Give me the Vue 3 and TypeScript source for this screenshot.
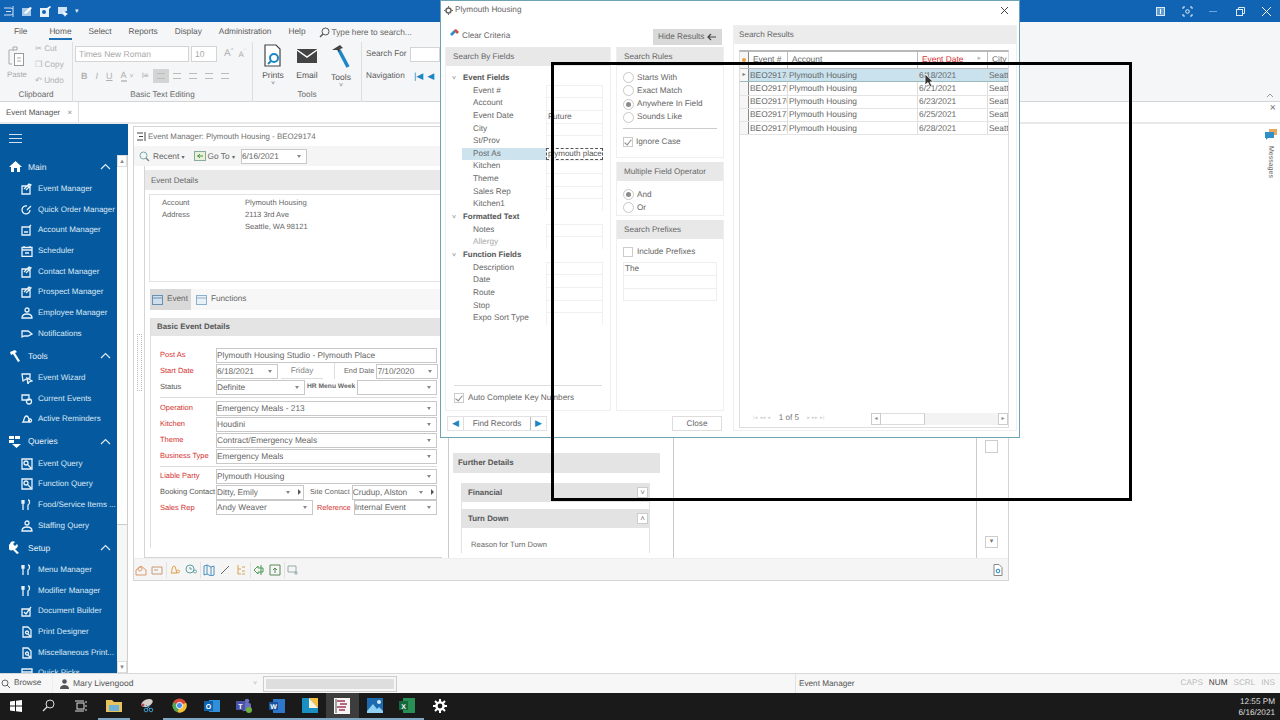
<template>
  <div class="screen">
    <!-- Title bar -->
    <div class="titlebar">
      <div class="qa-icons">
        <svg width="13" height="13" viewBox="0 0 13 13"><path d="M1 3h7M3 6.500h5M1 10h7M10 1v11M8 3l2 1M8 10l2-1" stroke="#cfe2f5" fill="none" /></svg>
        <svg width="13" height="13" viewBox="0 0 13 13"><rect x="1" y="3" width="9" height="8" fill="#a9cbe8" /><path d="M3 8l6-6 2 1-6 6z" fill="#fff" /></svg>
        <svg width="13" height="13" viewBox="0 0 13 13"><rect x="1" y="3" width="9" height="9" fill="#e8f1fa" /><circle cx="5" cy="7" r="2" fill="#1163b3" /><path d="M8 3l3-2 1 1-3 3z" fill="#fff" /></svg>
        <svg width="13" height="13" viewBox="0 0 13 13"><path d="M1 2h9v4l-3 1 1 4-3-2-4 0z" fill="#cfe2f5" /><path d="M6 6l5 3-2 1-1 2z" fill="#fff" /></svg>
        <span class="qa-caret">▾</span>
      </div>
      <div class="win-btns">
        <svg width="11" height="11" viewBox="0 0 11 11"><rect x="1.500" y="1.500" width="8" height="8" fill="#5d9bd5" stroke="#dbe9f6" /><path d="M5.500 3v5" stroke="#fff" /></svg>
        <svg width="11" height="11" viewBox="0 0 11 11"><path d="M1 3V1h2M8 1h2v2M10 8v2H8M3 10H1V8" stroke="#e8f1fa" fill="none" /><circle cx="5.500" cy="5.500" r="1.800" stroke="#e8f1fa" fill="none" /></svg>
        <svg width="11" height="11" viewBox="0 0 11 11"><path d="M1 5.500h8" stroke="#6ea6dc" /></svg>
        <svg width="11" height="11" viewBox="0 0 11 11"><rect x="1.500" y="3.500" width="6" height="6" fill="none" stroke="#dbe9f6" /><path d="M3.500 3.500v-2h6v6h-2" fill="none" stroke="#dbe9f6" /></svg>
        <svg width="11" height="11" viewBox="0 0 11 11"><path d="M1 1l9 9M10 1l-9 9" stroke="#fff" /></svg>
      </div>
    </div>

    <!-- Ribbon -->
    <div class="ribbon">
      <div class="menu-tabs">
        <span v-for="tab in menuTabs" :key="tab" :class="['menu-tab', { current: tab === 'Home' }]">{{ tab }}</span>
        <svg class="search-glass" width="11" height="11" viewBox="0 0 11 11"><circle cx="6.500" cy="4.500" r="3.500" fill="none" stroke="#555" /><path d="M4 7l-3 3" stroke="#555" stroke-width="1.500" /></svg>
        <span class="search-hint">Type here to search...</span>
      </div>
      <div class="ribbon-body">
        <div class="r-group clip-group">
          <div class="r-top">
            <div class="paste">
              <svg width="18" height="24" viewBox="0 0 18 24"><path d="M1 5h5M1 5v14h3M5 2h4v3H5z" stroke="#aaa" fill="none" /><rect x="6.500" y="8.500" width="9" height="12" fill="#fff" stroke="#999" /><path d="M9 13h4M9 16h4" stroke="#aaa" /></svg>
              <span>Paste</span>
            </div>
            <div class="clip-list">
              <span>✂ Cut</span>
              <span>❐ Copy</span>
              <span>↶ Undo</span>
            </div>
          </div>
          <div class="r-label">Clipboard</div>
        </div>
        <div class="r-group text-group">
          <div class="r-top text-tools">
            <div class="font-row">
              <div class="font-box font-name">Times New Roman</div>
              <div class="font-box font-size">10</div>
              <span class="grow-a">A<sup>^</sup></span>
              <span class="grow-a small-a">A<sup>ˇ</sup></span>
            </div>
            <div class="fmt-row">
              <b>B</b><i>I</i><u>U</u>
              <span class="fmt-a">A</span>
              <span class="fmt-gap">˅</span>
              <span class="fmt-para">I≡</span>
              <span class="fmt-lines active"></span>
              <span class="fmt-lines"></span>
              <span class="fmt-lines"></span>
              <span class="fmt-lines"></span>
              <span class="fmt-lines"></span>
            </div>
          </div>
          <div class="r-label">Basic Text Editing</div>
        </div>
        <div class="r-group tools-group">
          <div class="r-top big-row">
            <div class="big-btn">
              <svg width="20" height="24" viewBox="0 0 20 24"><path d="M2 1h11l4 4v17H2z" fill="#fff" stroke="#444" stroke-width="1.200" /><circle cx="11" cy="14" r="4" fill="none" stroke="#1c86c6" stroke-width="2" /><path d="M8 17l-3 3" stroke="#1c86c6" stroke-width="2" /></svg>
              <span>Prints</span>
              <span class="big-caret">˅</span>
            </div>
            <div class="big-btn">
              <svg width="24" height="24" viewBox="0 0 24 24"><path d="M2 5h20v14H2z" fill="#444" /><path d="M2 6l10 7 10-7" fill="none" stroke="#fff" stroke-width="1.500" /></svg>
              <span>Email</span>
            </div>
            <div class="big-btn">
              <svg width="24" height="26" viewBox="0 0 24 26"><path d="M10 6l9 17" stroke="#1c86c6" stroke-width="3.500" /><path d="M3 6l8-5 3 3-3 1-1 3-2-2z" fill="#444" /></svg>
              <span>Tools</span>
              <span class="big-caret">˅</span>
            </div>
          </div>
          <div class="r-label">Tools</div>
        </div>
        <div class="r-group nav-group">
          <div class="nav-line"><span class="nav-label">Search For</span><div class="search-for"></div></div>
          <div class="nav-line"><span class="nav-label">Navigation</span><span class="nav-arrow">|◀</span><span class="nav-arrow">◀</span></div>
        </div>
        <svg class="ribbon-collapse" width="8" height="6" viewBox="0 0 8 6"><path d="M1 5l3-3 3 3" fill="none" stroke="#999" /></svg>
      </div>
    </div>

    <!-- Document tabs -->
    <div class="doc-tabs">
      <div class="doc-tab">Event Manager <span class="doc-x">×</span></div>
      <span class="doc-close">×</span>
    </div>

    <div class="workspace">
      <!-- Left navigation -->
      <aside class="sidebar">
        <div class="burger"><span></span><span></span><span></span></div>
        <div class="side-scroll-wrap">
          <nav class="side-list">
            <template v-for="section in navSections" :key="section.title">
              <div class="side-head">
                <svg width="13" height="13" viewBox="0 0 13 13"><path :d="section.icon" fill="#fff" /></svg>
                <span>{{ section.title }}</span>
                <svg class="side-chevron" width="11" height="7" viewBox="0 0 11 7"><path d="M1 6l4.500-4.500L10 6" fill="none" stroke="#dfeaf5" stroke-width="1.200" /></svg>
              </div>
              <div v-for="item in section.items" :key="item.label" class="side-item">
                <svg width="12" height="12" viewBox="0 0 12 12"><path :d="iconPaths[item.icon]" fill="none" stroke="#eaf2fa" stroke-width="1.300" /></svg>
                <span>{{ item.label }}</span>
              </div>
            </template>
          </nav>
          <div class="side-bar">
            <div class="sb-btn">▴</div>
            <div class="sb-thumb"></div>
            <div class="sb-rest"></div>
            <div class="sb-btn">▾</div>
          </div>
        </div>
      </aside>

      <!-- Event Manager window -->
      <div class="grip"></div>
      <section class="panel">
        <div class="panel-title">
          <svg width="11" height="11" viewBox="0 0 11 11"><path d="M1 2h6M3 5.500h4M1 9h6M9 1v9" stroke="#444" fill="none" /></svg>
          <span>Event Manager: Plymouth Housing - BEO29174</span>
        </div>
        <div class="panel-toolbar">
          <svg width="11" height="11" viewBox="0 0 11 11"><circle cx="4.500" cy="4.500" r="3.500" fill="none" stroke="#7aa" /><path d="M7 7l3 3" stroke="#888" stroke-width="1.500" /></svg>
          <span>Recent <small>▾</small></span>
          <svg class="goto-icon" width="12" height="10" viewBox="0 0 12 10"><rect x="0.500" y="0.500" width="11" height="9" fill="#e6f2da" stroke="#8a9" /><path d="M3 5h6M6 3l-2 2 2 2" stroke="#5a8a3a" fill="none" /></svg>
          <span class="goto-txt">Go To <small>▾</small></span>
          <div class="field goto-date"><span>6/16/2021</span><i class="caret"></i></div>
        </div>
        <div class="panel-body">
          <div class="splitter"><div></div></div>

          <div class="col-left">
            <div class="sec-head">Event Details</div>
            <div class="details-box">
              <div class="detail-line"><span>Account</span><span>Plymouth Housing</span></div>
              <div class="detail-line"><span>Address</span><span>2113 3rd Ave</span></div>
              <div class="detail-line"><span></span><span>Seattle, WA 98121</span></div>
            </div>
            <div class="view-tabs">
              <div class="view-tab on">
                <svg width="11" height="10" viewBox="0 0 11 10"><rect x="0.500" y="0.500" width="10" height="9" fill="#cfdfee" stroke="#6b8fae" /><path d="M0 3h11" stroke="#6b8fae" /></svg>
                Event
              </div>
              <div class="view-tab">
                <svg width="11" height="10" viewBox="0 0 11 10"><rect x="0.500" y="0.500" width="10" height="9" fill="#e8f0f8" stroke="#8fb0cc" /><path d="M0 3h11" stroke="#8fb0cc" /></svg>
                Functions
              </div>
            </div>
            <div class="basic-box">
              <div class="basic-head">Basic Event Details</div>
              <div class="form">
                <div class="f-row">
                  <label class="req">Post As</label>
                  <div class="field grow"><span>Plymouth Housing Studio - Plymouth Place</span></div>
                </div>
                <div class="f-row">
                  <label class="req">Start Date</label>
                  <div class="field w62"><span>6/18/2021</span><i class="caret"></i></div>
                  <div class="weekday">Friday</div>
                  <div class="v-sep"></div>
                  <span class="mini">End Date</span>
                  <div class="field w62 tight"><span>7/10/2020</span><i class="caret"></i></div>
                </div>
                <div class="f-row">
                  <label>Status</label>
                  <div class="field w89"><span>Definite</span><i class="caret"></i></div>
                  <span class="mini strong hr-label">HR Menu Week</span>
                  <div class="field grow"><i class="caret caret-end"></i></div>
                </div>
                <div class="f-line"></div>
                <div v-for="row in opRows" :key="row.label" class="f-row">
                  <label class="req">{{ row.label }}</label>
                  <div class="field grow"><span>{{ row.value }}</span><i class="caret"></i></div>
                </div>
                <div class="f-line second"></div>
                <div class="f-row">
                  <label class="req">Liable Party</label>
                  <div class="field grow"><span>Plymouth Housing</span><i class="caret"></i></div>
                </div>
                <div class="f-row">
                  <label>Booking Contact</label>
                  <div class="field w88"><span>Ditty, Emily</span><i class="caret"></i><i class="go"></i></div>
                  <span class="mini site-label">Site Contact</span>
                  <div class="field grow"><span>Crudup, Alston</span><i class="caret"></i><i class="go"></i></div>
                </div>
                <div class="f-row last">
                  <label class="req">Sales Rep</label>
                  <div class="field w97"><span>Andy Weaver</span><i class="caret"></i></div>
                  <span class="mini req ref-label">Reference</span>
                  <div class="field grow"><span>Internal Event</span><i class="caret"></i></div>
                </div>
              </div>
            </div>
          </div>

          <div class="col-mid">
            <div class="further-head">Further Details</div>
            <div class="fold-box">
              <div class="fold-head">Financial <span class="fold-btn">˅</span></div>
              <div class="fold-head second">Turn Down <span class="fold-btn">˄</span></div>
              <div class="fold-text">Reason for Turn Down</div>
            </div>
          </div>

          <div class="col-right"></div>

          <div class="col-scroll">
            <div class="cs-thumb"></div>
            <div class="cs-btn">▾</div>
          </div>
        </div>
        <div class="panel-footer">
          <template v-for="(group, g) in footerIcons" :key="g">
            <div class="foot-group">
              <svg v-for="(ic, i) in group" :key="i" width="12" height="12" viewBox="0 0 12 12">
                <path :d="ic.d" fill="none" :stroke="ic.color" stroke-width="1" />
              </svg>
            </div>
          </template>
          <svg class="foot-doc" width="10" height="12" viewBox="0 0 10 12"><path d="M1 .500h5l3 3v8H1z" fill="#fff" stroke="#888" /><circle cx="5" cy="7" r="1.800" fill="none" stroke="#1c86c6" /></svg>
        </div>
      </section>

      <div class="messages">
        <svg width="12" height="13" viewBox="0 0 12 13"><rect x="4" y="0" width="8" height="6" fill="#e8a860" /><path d="M0 3h9v6H3l-2 2V9H0z" fill="#2f8fc7" /></svg>
        <span>Messages</span>
      </div>
    </div>

    <!-- Status bar -->
    <div class="statusbar">
      <div class="st-browse">
        <svg width="10" height="10" viewBox="0 0 10 10"><circle cx="4" cy="4" r="3" fill="none" stroke="#666" /><path d="M6 6l3 3" stroke="#666" /></svg>
        Browse
      </div>
      <div class="st-user">
        <svg width="9" height="10" viewBox="0 0 9 10"><circle cx="4.500" cy="2.500" r="2.300" fill="#555" /><path d="M0 10c0-3 2-4 4.500-4s4.500 1 4.500 4z" fill="#555" /></svg>
        Mary Livengood
      </div>
      <span class="st-caret">˅</span>
      <div class="st-progress"><div></div></div>
      <div class="st-msg">Event Manager</div>
      <div class="st-keys">
        <span>CAPS</span><span class="lit">NUM</span><span>SCRL</span><span>INS</span>
      </div>
    </div>

    <!-- Taskbar -->
    <div class="taskbar">
      <div class="tb-slot">
        <svg width="12" height="12" viewBox="0 0 12 12"><path d="M0 1.500l5-.7v4.700H0zM6 .7L12 0v5.500H6zM0 6.500h5v4.700l-5-.7zM6 6.500h6V12l-6-.8z" fill="#fff" /></svg>
      </div>
      <div class="tb-slot">
        <svg width="13" height="13" viewBox="0 0 13 13"><circle cx="8" cy="5" r="4" fill="none" stroke="#ddd" /><path d="M5 8l-4 4" stroke="#ddd" stroke-width="1.300" /></svg>
      </div>
      <div class="tb-slot">
        <svg width="13" height="12" viewBox="0 0 13 12"><rect x="2" y="3" width="7" height="6" fill="none" stroke="#ddd" /><path d="M0 1h9M0 11h9M11 1v2M11 5v2M11 9v2" stroke="#ddd" /></svg>
      </div>
      <div class="tb-slot run">
        <svg width="16" height="14" viewBox="0 0 16 14"><path d="M0 1h6l2 2h8v10H0z" fill="#e8c25a" /><rect x="3" y="6" width="10" height="6" fill="#6db0d8" /></svg>
      </div>
      <div class="tb-slot">
        <svg width="15" height="15" viewBox="0 0 15 15"><ellipse cx="8" cy="5" rx="6" ry="3.500" fill="#d8d0c8" transform="rotate(-25 8 5)" /><circle cx="4" cy="7" r="1.500" fill="#b34a5a" /><circle cx="7" cy="12" r="1.800" fill="none" stroke="#3f9ad0" /><circle cx="12" cy="12" r="1.800" fill="none" stroke="#3f9ad0" /><path d="M7 7l4 4M11 7l-3 4" stroke="#3f9ad0" /></svg>
      </div>
      <div class="tb-slot run">
        <svg width="15" height="15" viewBox="0 0 16 16"><circle cx="8" cy="8" r="7.500" fill="#d94a38" /><path d="M8 8L1.500 4.500A7.500 7.500 0 0 0 6 15.300z" fill="#4aa851" /><path d="M8 8l-2 7.300A7.500 7.500 0 0 0 15 5z" fill="#f2c233" /><circle cx="8" cy="8" r="3.300" fill="#4c8bf0" stroke="#fff" /></svg>
      </div>
      <div class="tb-slot run">
        <svg width="16" height="14" viewBox="0 0 16 14"><rect x="5" y="1" width="11" height="12" fill="#2f8fd8" /><rect x="0" y="2" width="9" height="10" fill="#0f62ae" /><text x="4.500" y="10" text-anchor="middle" class="ico-letter">O</text></svg>
      </div>
      <div class="tb-slot run">
        <svg width="16" height="15" viewBox="0 0 16 15"><circle cx="11" cy="3" r="2.300" fill="#6a6fc0" /><rect x="6" y="5" width="9" height="8" rx="2" fill="#6a6fc0" /><rect x="0" y="3" width="9" height="9" fill="#4b53a8" /><text x="4.500" y="10.500" text-anchor="middle" class="ico-letter">T</text><circle cx="13" cy="12" r="3" fill="#6fb33f" /></svg>
      </div>
      <div class="tb-slot run">
        <svg width="16" height="14" viewBox="0 0 16 14"><rect x="4" y="0" width="12" height="14" fill="#2f78c9" /><rect x="0" y="3" width="9" height="8" fill="#17529e" /><text x="4.500" y="10" text-anchor="middle" class="ico-letter">W</text></svg>
      </div>
      <div class="tb-slot run">
        <svg width="16" height="15" viewBox="0 0 16 15"><rect width="16" height="15" fill="#f6c044" /><path d="M0 0h7l9 10v5H0z" fill="#1a8fc2" /><path d="M7 0l9 10H7z" fill="#fdf5d8" /></svg>
      </div>
      <div class="tb-slot run on">
        <svg width="16" height="16" viewBox="0 0 16 16"><rect width="16" height="16" fill="#f7f4f4" /><path d="M3 3h8M6 6h7M3 9h9M5 12h6" stroke="#a03a5c" stroke-width="1.600" /><path d="M2 1v14" stroke="#555" /></svg>
      </div>
      <div class="tb-slot run">
        <svg width="16" height="15" viewBox="0 0 16 15"><rect width="16" height="15" fill="#1c6bb0" /><path d="M0 13l6-7 4 5 2-2 4 4v2H0z" fill="#8fd0f2" /><circle cx="12" cy="4" r="2" fill="#cfeaf8" /></svg>
      </div>
      <div class="tb-slot run">
        <svg width="16" height="15" viewBox="0 0 16 15"><rect x="4" y="0" width="12" height="15" fill="#2a8f55" /><rect x="0" y="3" width="9" height="9" fill="#14693c" /><text x="4.500" y="10.500" text-anchor="middle" class="ico-letter">X</text></svg>
      </div>
      <div class="tb-slot">
        <svg width="14" height="14" viewBox="0 0 14 14"><circle cx="7" cy="7" r="3.600" fill="none" stroke="#fff" stroke-width="2.400" /><path d="M7 0v3M7 11v3M0 7h3M11 7h3M2 2l2 2M10 10l2 2M12 2l-2 2M4 10l-2 2" stroke="#fff" stroke-width="2" /></svg>
      </div>
      <div class="tb-clock">
        <div>12:55 PM</div>
        <div>6/16/2021</div>
      </div>
    </div>

    <!-- Search dialog -->
    <div class="dialog">
      <div class="dlg-title">
        <svg width="9" height="9" viewBox="0 0 9 9"><circle cx="4.500" cy="4.500" r="2.500" fill="none" stroke="#666" stroke-width="1.500" /><path d="M4.500 0v1.500M4.500 7.500V9M0 4.500h1.500M7.500 4.500H9" stroke="#666" /></svg>
        <span>Plymouth Housing</span>
        <svg class="dlg-x" width="9" height="9" viewBox="0 0 9 9"><path d="M1 1l7 7M8 1L1 8" stroke="#444" /></svg>
      </div>
      <div class="dlg-main">
        <div class="dlg-left">
          <div class="dlg-actions">
            <svg width="9" height="9" viewBox="0 0 9 9"><path d="M0 5l4-4 2 2-4 4z" fill="#2f8fc7" /><path d="M4 1l2-1 3 3-2 2-1-1z" fill="#d8493f" /></svg>
            <span class="clear-txt">Clear Criteria</span>
            <div class="hide-btn">
              <span>Hide Results</span>
              <svg width="9" height="8" viewBox="0 0 9 8"><path d="M9 4H1M4 1L1 4l3 3" fill="none" stroke="#444" stroke-width="1.200" /></svg>
            </div>
          </div>
          <div class="dlg-cols">
            <div class="by-fields">
              <div class="box-head">Search By Fields</div>
              <div class="tree">
                <template v-for="row in fieldRows" :key="row.label">
                  <div v-if="row.head" class="t-row t-head"><span class="t-chev">˅</span>{{ row.label }}</div>
                  <div v-else :class="['t-row', { picked: row.picked }]">
                    <span :class="['t-name', { dim: row.dim }]">{{ row.label }}</span>
                    <span :class="['t-input', { dashed: row.picked }]">{{ row.value }}</span>
                  </div>
                </template>
              </div>
              <div class="auto-line">
                <span class="check on"></span>
                <span>Auto Complete Key Numbers</span>
              </div>
            </div>
            <div class="rules">
              <div class="rule-box rule-a">
                <div class="box-head">Search Rules</div>
                <div class="rule-body">
                  <div v-for="rule in searchRules" :key="rule" class="radio-line">
                    <span :class="['radio', { on: rule === 'Anywhere In Field' }]"></span>{{ rule }}
                  </div>
                  <div class="rule-sep"></div>
                  <div class="radio-line"><span class="check on"></span>Ignore Case</div>
                </div>
              </div>
              <div class="rule-box rule-b">
                <div class="box-head">Multiple Field Operator</div>
                <div class="rule-body">
                  <div class="radio-line"><span class="radio on"></span>And</div>
                  <div class="radio-line"><span class="radio"></span>Or</div>
                </div>
              </div>
              <div class="rule-box rule-c">
                <div class="box-head">Search Prefixes</div>
                <div class="rule-body">
                  <div class="radio-line prefix-check"><span class="check"></span>Include Prefixes</div>
                  <div class="prefix-cell">The</div>
                  <div class="prefix-cell"></div>
                  <div class="prefix-cell"></div>
                </div>
              </div>
            </div>
          </div>
          <div class="dlg-bottom">
            <div class="find-btn">
              <span class="find-arrow">◀</span>
              <span class="find-txt">Find Records</span>
              <span class="find-arrow">▶</span>
            </div>
            <div class="close-btn">Close</div>
          </div>
        </div>
        <div class="dlg-right">
          <div class="box-head results-head">Search Results</div>
          <div class="grid">
            <div class="g-head">
              <div class="g-mark"><i></i></div>
              <div class="g-cell c1">Event #</div>
              <div class="g-cell c2">Account</div>
              <div class="g-cell c3 sorted">Event Date <em>▸</em></div>
              <div class="g-cell c4">City</div>
            </div>
            <div v-for="(r, idx) in results" :key="r.id" :class="['g-row', { sel: idx === 0 }]">
              <div class="g-mark">{{ idx === 0 ? '▸' : '' }}</div>
              <div class="g-cell c1">{{ r.id }}</div>
              <div class="g-cell c2">Plymouth Housing</div>
              <div class="g-cell c3">{{ r.date }}</div>
              <div class="g-cell c4">Seattle</div>
            </div>
            <div class="g-space"></div>
            <div class="g-pager">
              <span class="pg-nav">|◂ ◂◂ ◂</span>
              <span class="pg-num">1 of 5</span>
              <span class="pg-nav">▸ ▸▸ ▸|</span>
              <div class="pg-scroll">
                <span class="ps-btn">◂</span>
                <span class="ps-thumb"></span>
                <span class="ps-track"></span>
                <span class="ps-btn">▸</span>
              </div>
            </div>
          </div>
        </div>
      </div>
    </div>

    <!-- Mouse pointer, over the grid -->
    <svg class="pointer" width="10" height="15" viewBox="0 0 10 15"><path d="M1 1v11l3-2.500L6 14l2-1-2-4h3.500z" fill="#333" stroke="#fff" stroke-width="0.800" /></svg>

    <!-- Annotation frame -->
    <div class="frame"></div>
  </div>
</template>

<script setup lang="ts">
interface NavItem {
  label: string
  icon: string
}

interface NavSection {
  title: string
  icon: string
  items: NavItem[]
}

interface FieldRow {
  label: string
  head?: boolean
  value?: string
  picked?: boolean
  dim?: boolean
}

const menuTabs = ['File', 'Home', 'Select', 'Reports', 'Display', 'Administration', 'Help']

const iconPaths: Record<string, string> = {
  form: 'M1 3h8v8H1zM3 6l5-5 2 1-5 5',
  ring: 'M9 6a4 4 0 1 1-3-4M6 6l4-4',
  card: 'M1 3h8v8H1zM3 8h4M5 5.500h.1M8 3l2-2',
  cal: 'M1 2.500h10v9H1zM1 5h10M3 1v2M9 1v2M4 8h4',
  person: 'M6 1a2 2 0 1 1 0 4 2 2 0 0 1 0-4M1 11c0-3 2-4 5-4s5 1 5 4z',
  flag: 'M1 3h6l4 3-4 2H3l-2 1z',
  wizard: 'M1 2h8v4l-4 1-3 2zM6 6l5 3-3 1-1 2z',
  clock: 'M1 2h7v5H1zM8 6a2.500 2.500 0 1 1 0 5 2.500 2.500 0 0 1 0-5',
  bell: 'M2 9c1-1 1-6 3.500-6S8 8 9 9zM9 9a1.500 1.500 0 1 1 .1 0',
  query: 'M1 1h10v10H1zM3 5a2 2 0 1 1 4 0 2 2 0 0 1-4 0M7 7l3 3',
  food: 'M2 1v10M1 1v3h2V1M7 1c2 0 2 4 0 5v5',
  doc: 'M2 1h5l3 3v7H2zM6 8a1.500 1.500 0 1 1 0-3 1.500 1.500 0 0 1 0 3M7 8l2 2',
  tick: 'M1 4h8v7H1zM3 7l2 2 5-7',
  grid: 'M1 2h10v8H1zM1 5h10',
}

const navSections: NavSection[] = [
  {
    title: 'Main',
    icon: 'M6.500 1L13 7h-2v5H8V8H5v4H2V7H0z',
    items: [
      { label: 'Event Manager', icon: 'form' },
      { label: 'Quick Order Manager', icon: 'ring' },
      { label: 'Account Manager', icon: 'card' },
      { label: 'Scheduler', icon: 'cal' },
      { label: 'Contact Manager', icon: 'form' },
      { label: 'Prospect Manager', icon: 'form' },
      { label: 'Employee Manager', icon: 'person' },
      { label: 'Notifications', icon: 'flag' },
    ],
  },
  {
    title: 'Tools',
    icon: 'M1 3l5-2 2 2-2 1 5 8-2 1-5-8-2 1z',
    items: [
      { label: 'Event Wizard', icon: 'wizard' },
      { label: 'Current Events', icon: 'clock' },
      { label: 'Active Reminders', icon: 'bell' },
    ],
  },
  {
    title: 'Queries',
    icon: 'M0 1h5v3H0zM6 1h5v3H6zM0 5h5v3H0zM3 9h9l-4.500 4z',
    items: [
      { label: 'Event Query', icon: 'query' },
      { label: 'Function Query', icon: 'query' },
      { label: 'Food/Service Items ...', icon: 'food' },
      { label: 'Staffing Query', icon: 'person' },
    ],
  },
  {
    title: 'Setup',
    icon: 'M1 3a3 3 0 0 1 5-2L4 3l2 2 2-2a3 3 0 0 1-2 5l4 4-2 1-4-4a3 3 0 0 1-3-6z',
    items: [
      { label: 'Menu Manager', icon: 'food' },
      { label: 'Modifier Manager', icon: 'food' },
      { label: 'Document Builder', icon: 'tick' },
      { label: 'Print Designer', icon: 'doc' },
      { label: 'Miscellaneous Print...', icon: 'doc' },
      { label: 'Quick Picks', icon: 'grid' },
    ],
  },
]

const opRows = [
  { label: 'Operation', value: 'Emergency Meals - 213' },
  { label: 'Kitchen', value: 'Houdini' },
  { label: 'Theme', value: 'Contract/Emergency Meals' },
  { label: 'Business Type', value: 'Emergency Meals' },
]

const footerIcons = [
  [
    { d: 'M1 6l5-4 5 4v5H1zM5 7a2 2 0 1 1 .1 0', color: '#e0986a' },
    { d: 'M1 3h10v7H1zM3 6h4', color: '#c89a70' },
  ],
  [
    { d: 'M2 9c1-1 1-7 3-7s2 6 3 7zM9 9a1.500 1.500 0 1 1 .1 0', color: '#e09a40' },
    { d: 'M1 5a4 4 0 1 1 8 0 4 4 0 0 1-8 0M5 3v2h2M10 9a1.500 1.500 0 1 1 .1 0', color: '#5aa0a0' },
  ],
  [
    { d: 'M1 2l3-1 4 2 3-1v9l-3 1-4-2-3 1zM4 1v9M8 3v9', color: '#4a90c0' },
    { d: 'M2 10L10 2M3 3h.1M9 9h.1', color: '#666' },
    { d: 'M3 1v9h3M3 5h3M7 3h3M7 7h3M7 10h3', color: '#d8a050' },
  ],
  [
    { d: 'M1 6l4-4v2h5v4H5v2zM8 1v10', color: '#4a9a50' },
    { d: 'M1 1h10v10H1zM6 9V4M4 6l2-2 2 2', color: '#5a8a5a' },
  ],
  [{ d: 'M1 2h8v6H1zM7 9h4M9 7v4', color: '#9aa' }],
]

const fieldRows: FieldRow[] = [
  { label: 'Event Fields', head: true },
  { label: 'Event #' },
  { label: 'Account' },
  { label: 'Event Date', value: 'Future' },
  { label: 'City' },
  { label: 'St/Prov' },
  { label: 'Post As', value: 'plymouth place', picked: true },
  { label: 'Kitchen' },
  { label: 'Theme' },
  { label: 'Sales Rep' },
  { label: 'Kitchen1' },
  { label: 'Formatted Text', head: true },
  { label: 'Notes' },
  { label: 'Allergy', dim: true },
  { label: 'Function Fields', head: true },
  { label: 'Description' },
  { label: 'Date' },
  { label: 'Route' },
  { label: 'Stop' },
  { label: 'Expo Sort Type' },
]

const searchRules = ['Starts With', 'Exact Match', 'Anywhere In Field', 'Sounds Like']

const results = [
  { id: 'BEO29174', date: '6/18/2021' },
  { id: 'BEO29175', date: '6/21/2021' },
  { id: 'BEO29176', date: '6/23/2021' },
  { id: 'BEO29177', date: '6/25/2021' },
  { id: 'BEO29178', date: '6/28/2021' },
]
</script>

<style scoped>
* { box-sizing: border-box; }

.screen {
  position: relative;
  width: 1280px;
  height: 720px;
  overflow: hidden;
  display: flex;
  flex-direction: column;
  background: #fff;
  color: #5c5c5c;
  font-family: "Liberation Sans", Arial, sans-serif;
  font-size: 8.200px;
  line-height: 1;
  text-rendering: geometricPrecision;
}
svg { flex: none; }

/* title bar */
.titlebar {
  height: 22px;
  background: #1163b3;
  display: flex;
  align-items: center;
  justify-content: space-between;
  padding: 0 8px 0 3px;
  flex: none;
}
.qa-icons { display: flex; align-items: center; gap: 5px; }
.qa-caret { color: #dbe9f6; font-size: 7px; }
.win-btns { display: flex; gap: 15.500px; }

/* ribbon */
.ribbon { height: 80px; background: #f5f6f7; border-bottom: 1px solid #d5d5d5; flex: none; display: flex; flex-direction: column; }
.menu-tabs { height: 20px; position: relative; display: flex; align-items: center; padding-left: 14px; flex: none; }
.menu-tab { margin-right: 17px; font-size: 8.300px; padding: 3px 0 3px; border-bottom: 2px solid transparent; }
.menu-tab.current { border-bottom-color: #1e6fb5; margin-left: 5px; }
.search-glass { margin-left: -4px; }
.search-hint { margin-left: 2px; color: #666; font-size: 8.300px; }
.ribbon-body { flex: 1; display: flex; position: relative; padding-right: 10px; }
.r-group { display: flex; flex-direction: column; border-right: 1px solid #dedede; margin: 0 0 1px; }
.r-top { flex: 1; display: flex; }
.r-label { height: 13px; text-align: center; font-size: 8.200px; color: #6a6a6a; padding-top: 2px; }
.clip-group { width: 73px; }
.paste { width: 35px; padding: 3px 0 0 8px; display: flex; flex-direction: column; gap: 2px; color: #aaa; font-size: 7.800px; }
.paste span { margin-left: -1px; }
.clip-list { display: flex; flex-direction: column; gap: 8px; padding-top: 3px; color: #b0b0b0; font-size: 8.200px; white-space: nowrap; }
.text-group { width: 180px; }
.text-tools { flex-direction: column; padding: 4px 0 0 2px; }
.font-row { display: flex; align-items: center; gap: 2px; height: 16px; }
.font-box { height: 16px; background: #fff; border: 1px solid #d4d4d4; color: #a8a8a8; padding: 3px 3px; font-size: 8.500px; }
.font-name { width: 114px; }
.font-size { width: 26px; }
.grow-a { margin-left: 5px; color: #b0b0b0; font-size: 10px; }
.small-a { margin-left: 3px; font-size: 8px; }
.grow-a sup { font-size: 6px; }
.fmt-row { display: flex; align-items: center; gap: 8px; height: 16px; margin-top: 6px; padding-left: 6px; color: #b0b0b0; font-size: 9px; }
.fmt-a { border-bottom: 2px solid #c8c8c8; }
.fmt-gap { margin-left: -5px; font-size: 7px; }
.fmt-para { font-size: 8px; }
.fmt-lines { width: 8px; height: 6px; border-top: 1px solid #bbb; border-bottom: 1px solid #bbb; position: relative; }
.fmt-lines.active { background: #d4d4d4; outline: 4px solid #d4d4d4; }
.tools-group { width: 109px; }
.big-row { justify-content: space-around; padding: 2px 3px 0; }
.big-btn { display: flex; flex-direction: column; align-items: center; gap: 3px; color: #555; font-size: 8.500px; width: 30px; }
.big-caret { font-size: 7px; color: #888; margin-top: -3px; }
.nav-group { border: none; padding: 4px 0 0 4px; gap: 6px; width: 78px; }
.nav-line { display: flex; align-items: center; height: 16px; }
.nav-label { width: 44px; flex: none; font-size: 8.200px; white-space: nowrap; }
.search-for { width: 30px; height: 15px; background: #fff; border: 1px solid #d4d4d4; }
.nav-arrow { color: #1c86c6; font-size: 9px; margin-left: 4px; white-space: nowrap; }
.ribbon-collapse { position: absolute; right: 6px; bottom: 5px; }

/* document tabs */
.doc-tabs { height: 22px; flex: none; display: flex; align-items: stretch; justify-content: space-between; border-bottom: 2px solid #e9e9e9; padding-right: 4px; }
.doc-tab { width: 79px; padding: 7px 0 0 6px; border-right: 1px solid #ddd; font-size: 8px; color: #555; white-space: nowrap; }
.doc-x { margin-left: 5px; color: #888; }
.doc-close { padding-top: 1px; font-size: 11px; color: #777; }

/* workspace */
.workspace { flex: 1; min-height: 0; display: flex; align-items: flex-start; position: relative; }
.sidebar { width: 128px; height: 100%; flex: none; display: flex; flex-direction: column; background: #f5f5f5; }
.burger { height: 31px; background: #055a9f; padding: 10px 0 0 9px; flex: none; display: flex; flex-direction: column; gap: 3px; }
.burger span { display: block; width: 13px; height: 1px; background: #cfe2f5; }
.side-scroll-wrap { flex: 1; min-height: 0; display: flex; }
.side-list { width: 117px; background: #055a9f; color: #dde9f5; overflow: hidden; font-size: 8px; }
.side-head { height: 23.800px; display: flex; align-items: center; gap: 6px; padding: 0 5px 0 9px; font-size: 8.500px; color: #e6eff8; }
.side-chevron { margin-left: auto; margin-right: 1px; }
.side-item { height: 20.650px; display: flex; align-items: center; gap: 5px; padding-left: 21px; white-space: nowrap; }
.side-bar { width: 11px; background: #fff; border-right: 1px solid #cfcfcf; display: flex; flex-direction: column; }
.sb-btn { height: 12px; text-align: center; color: #888; font-size: 7px; line-height: 12px; background: #fff; border: 1px solid #ddd; }
.sb-thumb { height: 358px; background: #fff; border-bottom: 1px solid #ccc; }
.sb-rest { flex: 1; background: #f6f6f6; }
.grip { width: 5px; height: 100%; flex: none; }

/* event manager panel */
.panel { width: 876px; height: 455px; margin-top: 2px; flex: none; border: 1px solid #d5d5d5; background: #fff; display: flex; flex-direction: column; }
.panel-title { height: 19px; display: flex; align-items: center; gap: 1px; padding-left: 2px; background: #fff; font-size: 7.900px; color: #707070; flex: none; }
.panel-toolbar { height: 20px; display: flex; align-items: center; gap: 3px; padding-left: 5px; background: #f5f5f5; flex: none; font-size: 8.300px; color: #666; }
.panel-toolbar small { font-size: 6px; }
.goto-icon { margin-left: 6px; }
.goto-txt { margin-left: -1px; }
.goto-date { width: 66px; height: 16px; margin-left: 3px; }
.panel-body { height: 392px; display: flex; flex: none; overflow: hidden; position: relative; }
.splitter { width: 10px; flex: none; padding: 168px 0 0 3px; }
.splitter div { width: 5px; height: 57px; border: 1px dotted #bbb; }

.col-left { width: 298px; flex: none; padding: 4px 5px 5px 0; border-left: 1px solid #d5d5d5; border-bottom: 1px solid #d5d5d5; }
.sec-head { height: 20px; line-height: 22px; padding-left: 6px; background: #e9e9e9; color: #666; font-size: 8px; margin-right: -5px; }
.details-box { height: 88px; margin: 4px -5px 0 4px; border: 1px solid #e2e2e2; border-right: 0; padding: 2px 0 0 12px; }
.detail-line { display: flex; height: 12px; align-items: center; font-size: 7.600px; color: #666; }
.detail-line span:first-child { width: 83px; }
.view-tabs { height: 21px; display: flex; align-items: stretch; margin: 7px -5px 0 5px; background: #f7f7f7; }
.view-tab { display: flex; align-items: center; gap: 4px; padding: 0 3px 0 2px; font-size: 8.200px; color: #666; margin-right: 3px; }
.view-tab.on { background: #d9d9d9; }
.basic-box { height: 230px; margin: 8px -5px 0 5px; border-left: 1px solid #dedede; }
.basic-head { height: 18px; line-height: 18px; padding-left: 6px; background: #e4e4e4; color: #555; font-weight: 700; font-size: 7.900px; }
.form { padding: 11px 5px 0 9px; }
.f-row { height: 16px; display: flex; align-items: center; }
.f-row.last { height: 15px; }
.f-row label { width: 56px; flex: none; font-size: 7.500px; color: #555; white-space: nowrap; }
.f-row .req, .req { color: #d3312f; }
.f-line { height: 1px; background: #dcdcdc; margin: 2px 0; }
.f-line.second { margin: 2px 0 1px; }

.field { height: 15px; background: #fff; border: 1px solid #c8c8c8; display: flex; align-items: center; padding: 0 2px 0 0; font-size: 8.300px; color: #666; white-space: nowrap; overflow: hidden; }
.field span { flex: 1; }
.field.grow { flex: 1; min-width: 0; }
.w62 { width: 62px; flex: none; }
.w88 { width: 88px; flex: none; }
.w89 { width: 89px; flex: none; }
.w97 { width: 97px; flex: none; }
.tight { margin-left: 2px; }
.caret { width: 0; height: 0; border-left: 2px solid transparent; border-right: 2px solid transparent; border-top: 3px solid #888; margin: 0 3px 0 4px; flex: none; }
.caret-end { margin-left: auto; }
.field .go { width: 0; height: 0; border-top: 3px solid transparent; border-bottom: 3px solid transparent; border-left: 3px solid #555; flex: none; margin-left: 5px; }
.weekday { width: 42px; margin-left: 3px; text-align: center; height: 15px; line-height: 13px; color: #888; border-bottom: 1px solid #ddd; flex: none; }
.v-sep { width: 1px; height: 16px; background: #ddd; margin: 0 0 0 11px; flex: none; }
.mini { font-size: 7.300px; color: #666; flex: none; white-space: nowrap; }
.v-sep + .mini { margin-left: 9px; }
.strong { font-weight: 700; }
.hr-label { margin: 0 2px; font-size: 6.700px; }
.site-label { margin: 0 2px 0 6px; }
.ref-label { margin: 0 3px 0 4px; color: #d3312f; }

.col-mid { width: 212px; flex: none; margin-left: 6px; padding: 287px 0 0 4px; border-left: 1px solid #ccc; }
.further-head { height: 20px; line-height: 20px; padding-left: 5px; background: #e4e4e4; color: #555; font-weight: 700; font-size: 7.900px; }
.fold-box { margin: 10px 10px 0 8px; border-left: 1px solid #e2e2e2; border-right: 1px solid #e2e2e2; height: 70px; }
.fold-head { height: 19px; background: #e3e3e3; padding: 0 1px 0 6px; display: flex; align-items: center; justify-content: space-between; font-weight: 700; color: #555; font-size: 7.900px; }
.fold-head.second { margin-top: 7px; }
.fold-btn { width: 11px; height: 11px; background: #fff; border: 1px solid #ccc; color: #777; text-align: center; font-size: 8px; font-weight: 400; line-height: 9px; }
.fold-text { padding: 13px 0 0 9px; font-size: 7.600px; color: #666; }
.col-right { width: 304px; flex: none; margin-left: 13px; border-left: 1px solid #ccc; border-right: 1px solid #ccc; }
.col-scroll { width: 13px; margin-left: 8px; flex: none; display: flex; flex-direction: column; justify-content: space-between; padding: 272px 0 10px; }
.cs-thumb { height: 13px; border: 1px solid #ccc; margin-top: 2px; }
.cs-btn { height: 12px; border: 1px solid #ccc; text-align: center; color: #777; font-size: 7px; line-height: 10px; }

.panel-footer { flex: 1; background: #f5f5f5; border-top: 1px solid #eee; display: flex; align-items: center; }
.foot-group { display: flex; gap: 4px; padding: 2px 3px 2px 2px; border-right: 1px solid #e2e2e2; }
.foot-group:first-child { padding-left: 1px; }
.foot-group:last-of-type { border: none; }
.foot-doc { margin-left: auto; margin-right: 5px; }

/* messages strip */
.messages { margin-left: auto; padding: 5px 3px 0 0; width: 16px; display: flex; flex-direction: column; align-items: center; gap: 4px; }
.messages span { writing-mode: vertical-rl; color: #666; font-size: 7px; }

/* status bar */
.statusbar { height: 20px; flex: none; position: relative; display: flex; align-items: center; background: #f7f7f7; border-top: 1px solid #d8d8d8; font-size: 8.200px; color: #555; }
.st-browse { width: 53px; display: flex; align-items: center; gap: 3px; padding-left: 1px; border-right: 1px solid #eee; height: 100%; }
.st-user { width: 200px; display: flex; align-items: center; gap: 4px; padding-left: 7px; font-size: 8.500px; height: 100%; }
.st-caret { color: #bbb; font-size: 7px; width: 10px; }
.st-progress { width: 134px; height: 16px; border: 1px solid #ccc; padding: 2px; }
.st-progress div { height: 100%; background: #dedede; }
.st-msg { margin-left: 398px; height: 100%; border-left: 1px solid #e2e2e2; padding: 6px 0 0 3px; }
.st-keys { margin-left: auto; display: flex; gap: 6px; padding-right: 5px; font-size: 8.200px; color: #bbb; }
.st-keys .lit { color: #444; }

/* taskbar */
.taskbar { height: 27px; flex: none; background: #1a1a1a; display: flex; align-items: stretch; }
.tb-slot { width: 32.600px; display: flex; align-items: center; justify-content: center; border-bottom: 2px solid transparent; }
.tb-slot.run { border-bottom-color: #7fa8c4; }
.tb-slot.on { background: #3d3d3d; }
.tb-clock { margin-left: auto; padding: 3px 5px 0 0; text-align: right; color: #ddd; font-size: 8.200px; line-height: 11px; }
.ico-letter { fill: #fff; font-size: 7px; font-weight: 700; font-family: "Liberation Sans", sans-serif; }

/* dialog */
.dialog {
  position: absolute;
  left: 440px;
  top: 0;
  width: 580px;
  height: 438px;
  background: #fff;
  border: 1px solid #6ea3b5;
  display: flex;
  flex-direction: column;
  font-size: 8.200px;
  color: #666;
}
.dlg-title { height: 19px; flex: none; display: flex; align-items: center; gap: 2px; padding-left: 3px; font-size: 8.200px; }
.dlg-x { margin-left: auto; margin-right: 10px; }
.dlg-main { flex: 1; display: flex; min-height: 0; }
.dlg-left { width: 279px; margin-left: 4px; flex: none; }
.dlg-actions { height: 27px; padding: 9px 0 0 5px; display: flex; align-items: flex-start; gap: 3px; }
.clear-txt { padding-top: 3px; }
.hide-btn { margin-left: auto; margin-right: 2px; width: 69px; height: 16px; background: #d9d9d9; display: flex; align-items: center; gap: 3px; padding-left: 5px; white-space: nowrap; }
.dlg-cols { display: flex; gap: 5px; height: 364px; }
.box-head { height: 19px; line-height: 19px; padding-left: 7px; background: #e8e8e8; color: #666; flex: none; font-size: 8.100px; }
.by-fields { width: 166px; border: 1px solid #efefef; border-top: 0; display: flex; flex-direction: column; flex: none; }
.tree { flex: 1; padding: 6px 7px 0 6px; }
.t-row { height: 12.650px; display: flex; align-items: stretch; padding-left: 10px; font-size: 8.200px; color: #666; }
.t-head { padding-left: 0; align-items: center; font-weight: 700; color: #555; font-size: 7.900px; }
.t-chev { width: 9px; font-weight: 400; color: #888; font-size: 7px; margin-right: 2px; }
.t-name { width: 84px; padding: 2px 0 0 11px; flex: none; }
.t-name.dim { color: #aaa; }
.t-input { width: 57px; border: 1px solid #f0f0f0; border-bottom: none; padding: 2px 0 0 1px; white-space: nowrap; overflow: hidden; color: #666; }
.picked .t-name { background: #cde4ef; }
.t-input.dashed { border: 1px dashed #555; color: #555; padding-top: 1px; font-size: 8px; }
.auto-line { height: 25px; margin: 0 8px; border-top: 1px solid #ddd; display: flex; align-items: center; gap: 4px; }
.check { width: 10px; height: 10px; border: 1px solid #ccc; background: #fff; flex: none; position: relative; display: inline-block; }
.check.on::after { content: ""; position: absolute; left: 2px; top: 0; width: 3px; height: 6px; border: solid #888; border-width: 0 1px 1px 0; transform: rotate(40deg); }
.rules { width: 108px; flex: none; display: flex; flex-direction: column; gap: 4px; }
.rule-box { border: 1px solid #efefef; border-top: 0; display: flex; flex-direction: column; }
.rule-a { height: 111px; }
.rule-b { height: 54px; }
.rule-c { flex: 1; }
.rule-body { padding: 5px 6px 0 6px; flex: 1; }
.rule-b .rule-body { padding-top: 7px; }
.rule-c .rule-body { padding-top: 6px; }
.radio-line { height: 13.300px; display: flex; align-items: center; gap: 3px; white-space: nowrap; }
.radio { width: 11px; height: 11px; border: 1px solid #c8c8c8; border-radius: 50%; flex: none; display: flex; align-items: center; justify-content: center; background: #fff; }
.radio.on::after { content: ""; width: 5px; height: 5px; border-radius: 50%; background: #8a8a8a; }
.rule-sep { height: 1px; background: #ccc; margin: 4px 0 6px; }
.prefix-check { margin: 0 0 4px; gap: 4px; }
.prefix-cell { height: 13px; border: 1px solid #eee; border-bottom: none; padding: 2px 1px; }
.prefix-cell:last-child { border-bottom: 1px solid #eee; }
.dlg-bottom { display: flex; justify-content: space-between; padding: 5px 2px 0 2px; }
.find-btn { width: 100px; height: 15px; display: flex; border: 1px solid #e2e2e2; align-items: center; }
.find-arrow { width: 15px; text-align: center; color: #1c86c6; font-size: 9px; }
.find-txt { flex: 1; text-align: center; border-left: 1px solid #ddd; border-right: 1px solid #bbb; line-height: 13px; }
.close-btn { width: 50px; height: 15px; border: 1px solid #ddd; text-align: center; line-height: 13px; }
.dlg-right { width: 284px; margin: 5px 0 6px 9px; flex: none; border: 1px solid #efefef; display: flex; flex-direction: column; }
.results-head { height: 18px; line-height: 18px; padding-left: 5px; background: #ececec; }
.grid { margin: 6px 7px 0 5px; width: 270px; height: 378px; border: 1px solid #ddd; border-top: 2px solid #b8b8b8; display: flex; flex-direction: column; overflow: hidden; font-size: 8.400px; }
.g-head { height: 17px; display: flex; align-items: stretch; border-bottom: 1px solid #bbb; flex: none; }
.g-row { height: 13.300px; display: flex; align-items: stretch; border-bottom: 1px solid #e4e4e4; flex: none; }
.g-row.sel { background: #c9e2ee; border-bottom-color: #9bb; }
.g-mark { width: 9px; flex: none; border-right: 1px solid #888; background: #f6f6f6; display: flex; align-items: center; justify-content: center; font-size: 6px; color: #777; }
.g-mark i { width: 4px; height: 4px; border-radius: 50%; background: #eda03e; }
.g-cell { padding: 1.500px 0 0 1px; overflow: hidden; white-space: nowrap; border-right: 1px solid #ddd; flex: none; }
.c1 { width: 39px; }
.c2 { width: 130px; }
.c3 { width: 70px; }
.c4 { flex: 1; border-right: none; }
.g-head .g-cell { padding-top: 3px; padding-left: 4px; border-right: 1px solid #bbb; }
.g-head .c4 { border-right: none; }
.sorted { color: #d3312f; display: flex; justify-content: space-between; padding-right: 6px; }
.sorted em { color: #bbb; font-style: normal; font-size: 7px; }
.g-space { flex: 1; }
.g-pager { height: 15px; flex: none; display: flex; align-items: center; margin-bottom: 1px; padding-left: 13px; font-size: 8.200px; }
.pg-nav { color: #ccc; font-size: 5px; letter-spacing: 0.500px; white-space: nowrap; }
.pg-num { margin: 0 8px; color: #777; white-space: nowrap; }
.pg-scroll { margin-left: auto; width: 137px; height: 12px; display: flex; }
.ps-btn { width: 10px; border: 1px solid #ccc; text-align: center; font-size: 6px; line-height: 10px; color: #888; }
.ps-thumb { width: 44px; border-top: 1px solid #ddd; border-bottom: 1px solid #ddd; border-right: 1px solid #ccc; }
.ps-track { flex: 1; background: #f3f3f3; }

.pointer { position: absolute; left: 924px; top: 73px; }
.frame { position: absolute; left: 551px; top: 62px; width: 581px; height: 439px; border: 3px solid #000; pointer-events: none; }
</style>
